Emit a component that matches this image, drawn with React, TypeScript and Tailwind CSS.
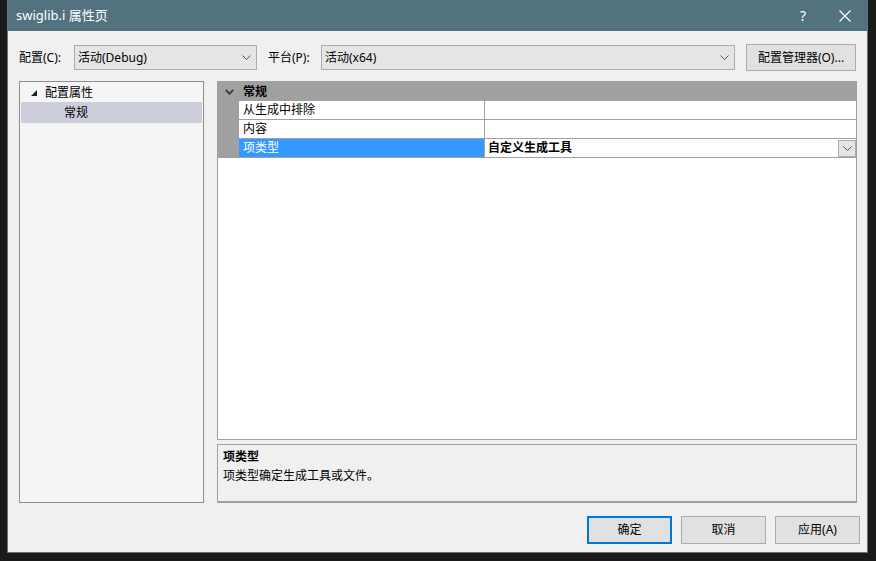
import { ReactNode } from 'react'

const font = "font-['Noto_Sans','Noto_Sans_CJK_SC',sans-serif]"

function Chevron({ className = '' }: { className?: string }) {
  return (
    <svg width="9" height="5" viewBox="0 0 9 5" className={className}>
      <polyline points="0.5,0.5 4.5,4.5 8.5,0.5" fill="none" stroke="#555" strokeWidth="1" />
    </svg>
  )
}

function Combo({ value, width }: { value: string; width: string }) {
  return (
    <div
      className={`${width} h-[25px] flex items-center justify-between pl-[3px] pr-[5px] bg-[#e5e5e5] border border-[#adadad] text-[12px] text-black`}
    >
      <span>{value}</span>
      <Chevron />
    </div>
  )
}

function Button({ children, primary }: { children: ReactNode; primary?: boolean }) {
  return (
    <div
      className={
        'w-[85px] h-[28px] flex items-center justify-center bg-[#e1e1e1] text-[12px] text-black ' +
        (primary ? 'border-2 border-[#0078d7]' : 'border border-[#adadad]')
      }
    >
      {children}
    </div>
  )
}

interface PropRow {
  name: string
  value?: string
  selected?: boolean
}

const rows: PropRow[] = [
  { name: '从生成中排除' },
  { name: '内容' },
  { name: '项类型', value: '自定义生成工具', selected: true },
]

export default function App() {
  return (
    <div className={`w-[876px] h-[561px] bg-[#1b1b1b] pl-[7px] ${font}`}>
      <div className="w-[861px] h-[553px] bg-[#f0f0f0] border border-[#5b7784] border-t-0 flex flex-col">
        {/* title bar */}
        <div className="h-[31px] bg-[#53727f] flex items-center pl-[8px] text-white text-[13px]">
          <span>swiglib.i 属性页</span>
          <span className="ml-auto text-[14px] mr-[33px]">?</span>
          <svg width="12" height="12" viewBox="0 0 12 12" className="mr-[16px]">
            <path d="M0.5 0.5L11.5 11.5M11.5 0.5L0.5 11.5" stroke="#fff" strokeWidth="1.2" />
          </svg>
        </div>

        {/* config row */}
        <div className="flex items-center mt-[13px] pl-[11px] text-[12px] text-black">
          <span className="w-[55px]">配置(C):</span>
          <Combo value="活动(Debug)" width="w-[183px]" />
          <span className="ml-[11px] w-[53px]">平台(P):</span>
          <Combo value="活动(x64)" width="w-[414px]" />
          <div className="ml-[11px] w-[110px] h-[27px] flex items-center justify-center bg-[#e1e1e1] border border-[#adadad]">
            配置管理器(O)...
          </div>
        </div>

        {/* main area */}
        <div className="flex mt-[10px] pl-[11px] gap-[13px] text-[12px] text-black">
          {/* tree */}
          <div className="w-[185px] h-[422px] bg-[#f5f5f5] border border-[#8c8c91] p-[1px]">
            <div className="h-[19px] flex items-center pl-[10px]">
              <svg width="6" height="6" viewBox="0 0 6 6">
                <polygon points="6,0 6,6 0,6" fill="#222" />
              </svg>
              <span className="ml-[8px]">配置属性</span>
            </div>
            <div className="h-[21px] flex items-center pl-[43px] bg-[#cccedb]">常规</div>
          </div>

          {/* right column */}
          <div className="w-[640px] flex flex-col gap-[4px]">
            <div className="h-[359px] bg-white border border-[#a0a0a0]">
              <div className="h-[19px] bg-[#a0a0a0] flex items-center">
                <div className="w-[22px] flex justify-center">
                  <svg width="9" height="6" viewBox="0 0 9 6">
                    <polyline points="0.8,0.8 4.5,4.8 8.2,0.8" fill="none" stroke="#3a3a3a" strokeWidth="1.8" />
                  </svg>
                </div>
                <span className="font-bold pl-[3px]">常规</span>
              </div>
              {rows.map((r) => (
                <div key={r.name} className="flex h-[19px]">
                  <div className="w-[21px] bg-[#a0a0a0]" />
                  <div
                    className={
                      'w-[246px] flex items-center pl-[4px] border-r border-b border-[#a0a0a0] ' +
                      (r.selected ? 'bg-[#3399ff] text-white' : '')
                    }
                  >
                    {r.name}
                  </div>
                  <div className="flex-1 flex items-center justify-between pl-[3px] border-b border-[#a0a0a0]">
                    <span className="font-bold">{r.value}</span>
                    {r.selected && (
                      <div className="w-[18px] h-[17px] bg-[#e5e5e5] border border-[#acacac] flex items-center justify-center">
                        <Chevron />
                      </div>
                    )}
                  </div>
                </div>
              ))}
            </div>

            {/* description */}
            <div className="h-[59px] bg-[#f0f0f0] border border-[#a0a0a0] border-b-2 px-[5px] pt-[2px] leading-[19px]">
              <div className="font-bold">项类型</div>
              <div>项类型确定生成工具或文件。</div>
            </div>
          </div>
        </div>

        {/* buttons */}
        <div className="flex justify-end gap-[9px] mt-[13px] pr-[7px]">
          <Button primary>确定</Button>
          <Button>取消</Button>
          <Button>应用(A)</Button>
        </div>
      </div>
    </div>
  )
}
